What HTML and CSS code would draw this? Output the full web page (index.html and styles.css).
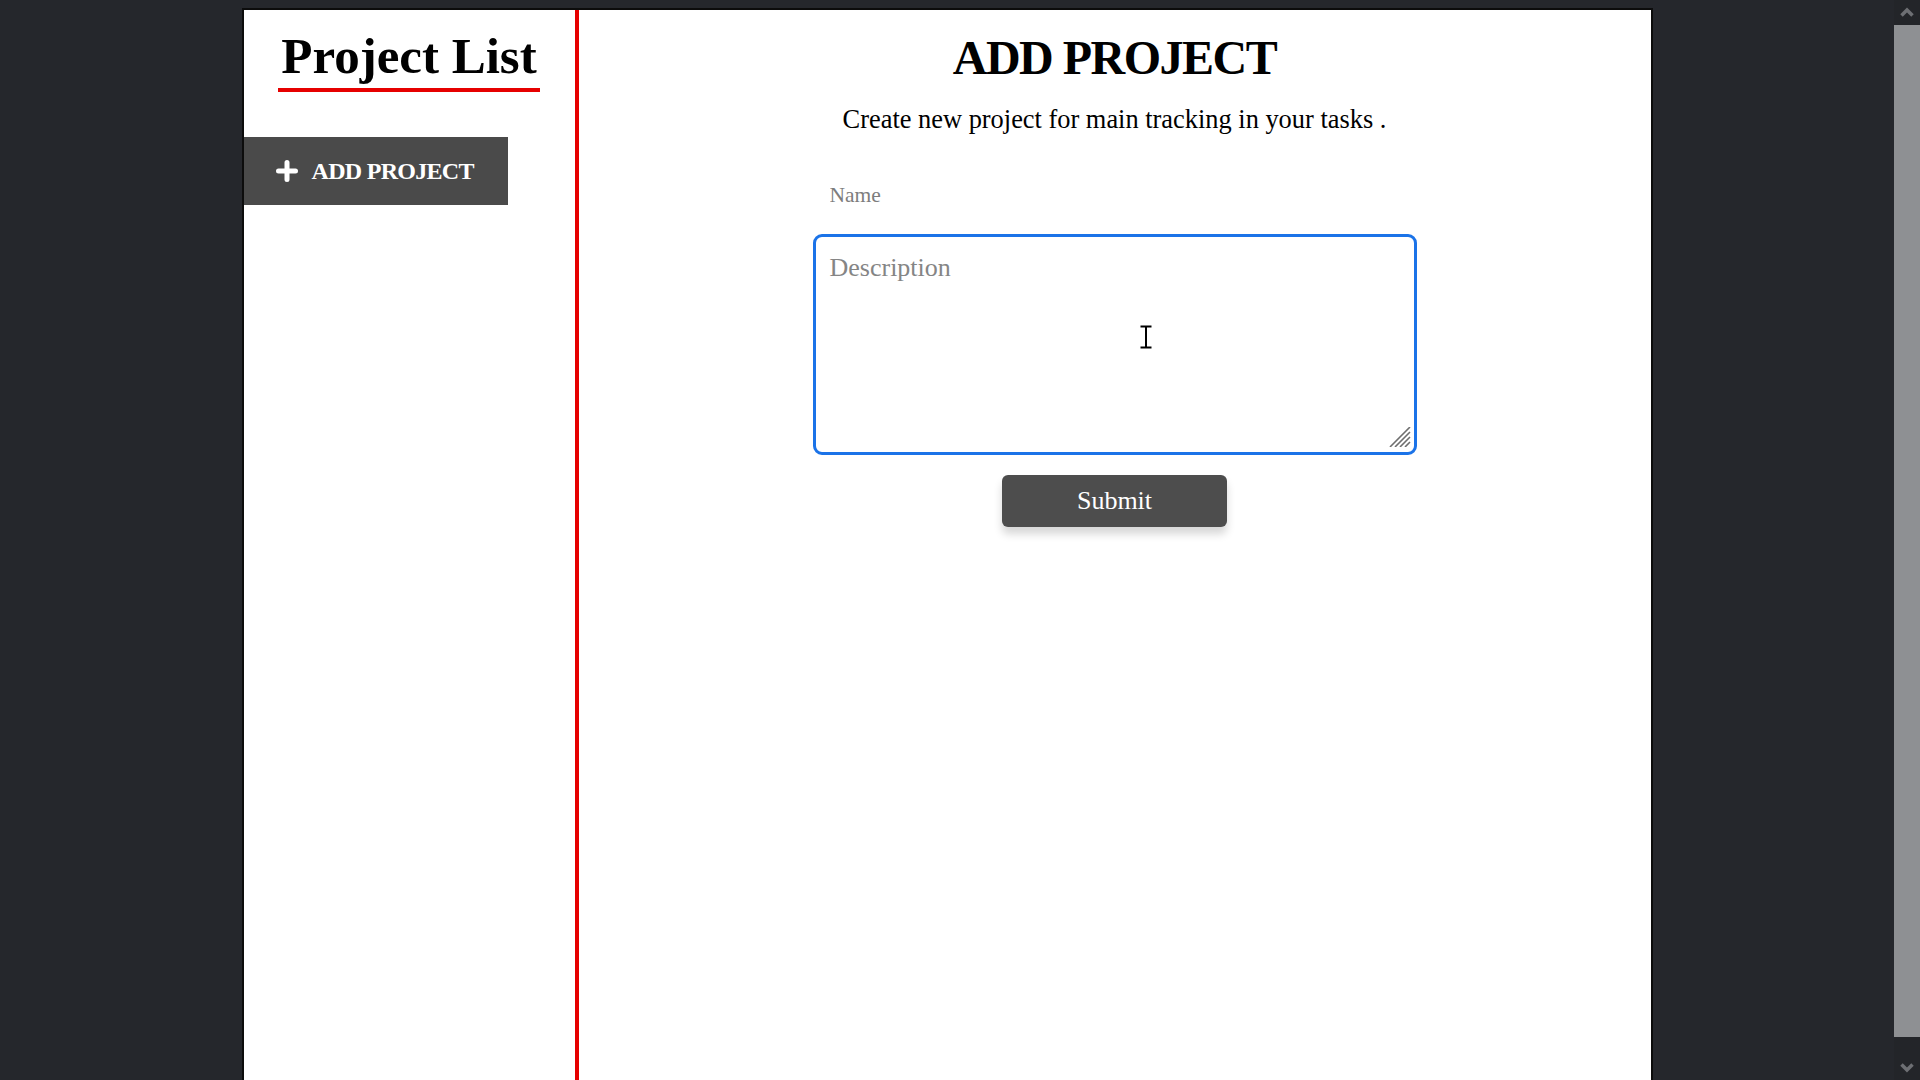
FILE: index.html
```html
<!DOCTYPE html>
<html lang="en">
<head>
<meta charset="utf-8">
<title>Project List</title>
<link rel="stylesheet" href="styles.css">
</head>
<body>
  <div class="viewport">
    <div class="card">
      <aside class="sidebar">
        <h1 class="brand">Project List</h1>
        <button class="add-btn" type="button">
          <svg class="plus" viewBox="0 0 22 22" width="22" height="22" aria-hidden="true">
            <path d="M11 2.5 V19.5 M2.5 11 H19.5" fill="none" stroke="#ffffff" stroke-width="5" stroke-linecap="round"/>
          </svg>
          <span>ADD PROJECT</span>
        </button>
      </aside>
      <main class="main">
        <h2 class="title">ADD PROJECT</h2>
        <p class="subtitle">Create new project for main tracking in your tasks .</p>
        <form class="form">
          <input class="name" type="text" placeholder="Name">
          <div class="field">
            <textarea class="desc" placeholder="Description"></textarea>
            <svg class="grip" viewBox="0 0 22 20" width="22" height="20" aria-hidden="true">
              <path d="M1 20 L21 0 M6 20 L21 5 M11 20 L21 10 M16 20 L21 15" fill="none" stroke="#6f6f6f" stroke-width="1.6"/>
            </svg>
            <svg class="ibeam" viewBox="0 0 14 24" width="14" height="24" aria-hidden="true">
              <path d="M1 1.5 H13 M7 1.5 V22.5 M1 22.5 H13" fill="none" stroke="#ffffff" stroke-width="4"/>
              <path d="M1.5 1.5 H12.5 M7 1.5 V22.5 M1.5 22.5 H12.5" fill="none" stroke="#000000" stroke-width="2"/>
            </svg>
          </div>
          <button class="submit" type="button">Submit</button>
        </form>
      </main>
    </div>
  </div>
  <div class="scrollbar" aria-hidden="true">
    <div class="sb-btn sb-up">
      <svg viewBox="0 0 26 25" width="26" height="25"><path d="M7.5 15.5 L13 10 L18.5 15.5" fill="none" stroke="#6d6f73" stroke-width="3.5"/></svg>
    </div>
    <div class="sb-thumb"></div>
    <div class="sb-track"></div>
    <div class="sb-btn sb-down">
      <svg viewBox="0 0 26 26" width="26" height="26"><path d="M7.5 10.5 L13 16 L18.5 10.5" fill="none" stroke="#6d6f73" stroke-width="3.5"/></svg>
    </div>
  </div>
</body>
</html>
```

FILE: styles.css
```css
html {
  background: #25272c;
  overflow: hidden;
}

body {
  margin: 0;
  height: 100vh;
  overflow: hidden;
  display: flex;
  font-family: "Liberation Serif", "Times New Roman", serif;
  color: #000;
}

.viewport {
  flex: 1;
  min-width: 0;
  padding: 8px 8px 0;
  overflow: hidden;
}

.scrollbar {
  width: 26px;
  flex: none;
  display: flex;
  flex-direction: column;
  background: #232529;
}

.sb-btn svg {
  display: block;
}

.sb-up {
  height: 25px;
}

.sb-down {
  height: 26px;
}

.sb-thumb {
  height: 1012px;
  background: #8e9093;
}

.sb-track {
  flex: 1;
}

.card {
  box-sizing: border-box;
  width: 1411px;
  height: 1081px;
  margin: 0 auto;
  background: #ffffff;
  border: 2px solid #0c0c0c;
  display: flex;
}

.sidebar {
  width: 331px;
  flex: none;
  border-right: 4px solid #e60000;
  padding-top: 21px;
  display: flex;
  flex-direction: column;
}

.brand {
  align-self: center;
  margin: 0;
  padding: 0 3px 6px;
  font-size: 51px;
  line-height: 51px;
  font-weight: 700;
  border-bottom: 4px solid #e60000;
}

.add-btn {
  margin-top: 45px;
  width: 264px;
  height: 68px;
  padding: 0 0 0 32px;
  border: none;
  background: #4a4a4a;
  color: #ffffff;
  display: flex;
  align-items: center;
  gap: 14px;
  font-family: "Liberation Serif", "Times New Roman", serif;
  font-size: 24px;
  font-weight: 700;
  letter-spacing: -0.7px;
  cursor: pointer;
}

.plus {
  flex: none;
  display: block;
}

.main {
  flex: 1;
  padding-top: 24px;
  display: flex;
  flex-direction: column;
  align-items: center;
}

.title {
  margin: 0;
  font-size: 48px;
  line-height: 48px;
  font-weight: 700;
  letter-spacing: -1.5px;
}

.subtitle {
  margin: 24px 0 0;
  font-size: 26.4px;
  line-height: 26px;
}

.form {
  margin-top: 32px;
  width: 604px;
  display: flex;
  flex-direction: column;
  align-items: center;
}

.name {
  box-sizing: border-box;
  display: block;
  width: 100%;
  margin: 0;
  padding: 16px 14px;
  border: 3px solid transparent;
  outline: none;
  background: transparent;
  font-family: "Liberation Serif", "Times New Roman", serif;
  font-size: 21.5px;
  line-height: 24px;
  color: #000;
}

.name::placeholder {
  color: #7d7d7d;
}

.field {
  position: relative;
  width: 100%;
  margin-top: 8px;
}

.desc {
  box-sizing: border-box;
  display: block;
  width: 100%;
  height: 221px;
  margin: 0;
  padding: 16px 14px;
  border: 3px solid #1b73e8;
  border-radius: 9px;
  outline: none;
  resize: none;
  font-family: "Liberation Serif", "Times New Roman", serif;
  font-size: 26px;
  line-height: 30px;
  color: #000;
}

.desc::placeholder {
  color: #858585;
}

.grip {
  position: absolute;
  right: 6px;
  bottom: 8px;
  pointer-events: none;
}

.ibeam {
  position: absolute;
  left: 326px;
  top: 91px;
  pointer-events: none;
}

.submit {
  margin-top: 20px;
  width: 225px;
  height: 52px;
  border: none;
  border-radius: 6px;
  background: #4d4d4d;
  color: #ffffff;
  font-family: "Liberation Serif", "Times New Roman", serif;
  font-size: 26px;
  box-shadow: 0 7px 9px rgba(0, 0, 0, 0.16);
  cursor: pointer;
}
```
